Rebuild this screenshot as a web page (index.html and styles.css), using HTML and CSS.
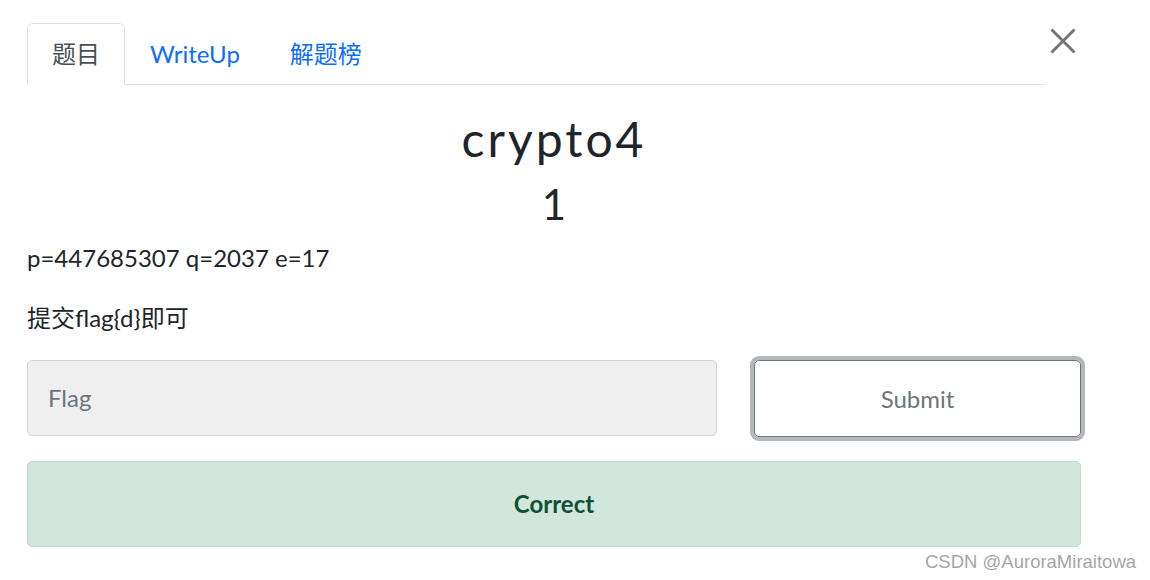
FILE: index.html
```html
<!DOCTYPE html>
<html lang="zh">
<head>
<meta charset="utf-8">
<title>crypto4</title>
<link rel="stylesheet" href="styles.css">
</head>
<body>
<div class="modal">
  <div class="header">
    <ul class="tabs">
      <li class="tab active">题目</li>
      <li class="tab">WriteUp</li>
      <li class="tab">解题榜</li>
    </ul>
    <div class="close">
      <svg width="26" height="26" viewBox="0 0 26 26"><path d="M1.5 1.5 L24.5 24.5 M24.5 1.5 L1.5 24.5" stroke="#757575" stroke-width="3" fill="none"/></svg>
    </div>
  </div>
  <h2 class="name">crypto4</h2>
  <h3 class="value">1</h3>
  <p class="desc">p=447685307 q=2037 e=17</p>
  <p class="desc last">提交flag{d}即可</p>
  <div class="form-row">
    <div class="input">Flag</div>
    <div class="submit">Submit</div>
  </div>
  <div class="alert">Correct</div>
</div>
<div class="watermark">CSDN @AuroraMiraitowa</div>
</body>
</html>
```
FILE: styles.css
```css
html, body {
  margin: 0;
  padding: 0;
  background: #fff;
}
body {
  font-family: Lato, "Noto Sans CJK SC", sans-serif;
  color: #212529;
  font-size: 24px;
  line-height: 36px;
  width: 1150px;
  height: 580px;
  overflow: hidden;
  position: relative;
}
.modal {
  padding: 23px 0 0 27px;
  width: 1054px;
}
.header {
  display: flex;
}
.tabs {
  list-style: none;
  margin: 0;
  padding: 0;
  display: flex;
  width: 1018px;
  border-bottom: 1px solid #dee2e6;
}
.tab {
  padding: 12px 24px;
  line-height: 36px;
  border: 1px solid transparent;
  border-bottom: none;
  border-radius: 6px 6px 0 0;
  color: #0d6efd;
  margin-bottom: -1px;
}
.tab.active {
  color: #495057;
  border-color: #dee2e6;
  background: #fff;
  padding-bottom: 13px;
}
.close {
  width: 36px;
  display: flex;
  justify-content: center;
  padding-top: 5px;
}
.name {
  margin: 0;
  padding-top: 25px;
  text-align: center;
  font-weight: 400;
  font-size: 48px;
  line-height: 57.6px;
  letter-spacing: 3px;
  margin-bottom: 11px;
}
.value {
  margin: 0 0 11px;
  text-align: center;
  font-weight: 400;
  font-size: 42px;
  line-height: 50.4px;
}
.desc {
  margin: 0 0 24px;
}
.desc.last {
  margin-bottom: 24px;
}
.form-row {
  display: flex;
  gap: 37px;
}
.input {
  box-sizing: border-box;
  width: 690px;
  height: 76px;
  background: #efefef;
  border: 1px solid #ced4da;
  border-radius: 5px;
  padding: 0 20px;
  display: flex;
  align-items: center;
  color: #6c757d;
}
.submit {
  box-sizing: border-box;
  width: 327px;
  height: 77px;
  border: 1px solid #6c757d;
  border-radius: 5px;
  box-shadow: 0 0 0 4px #b3b8bd;
  display: flex;
  align-items: center;
  justify-content: center;
  color: #6c757d;
}
.alert {
  box-sizing: border-box;
  margin-top: 24px;
  height: 86px;
  background: #d1e6dd;
  border: 1px solid #bcdccd;
  border-radius: 5px;
  color: #0f5132;
  font-weight: 700;
  display: flex;
  align-items: center;
  justify-content: center;
}
.watermark {
  position: absolute;
  left: 925px;
  top: 550px;
  font-family: "Liberation Sans", Arial, sans-serif;
  font-size: 18.5px;
  line-height: 24px;
  color: #a6a6a6;
}
```
